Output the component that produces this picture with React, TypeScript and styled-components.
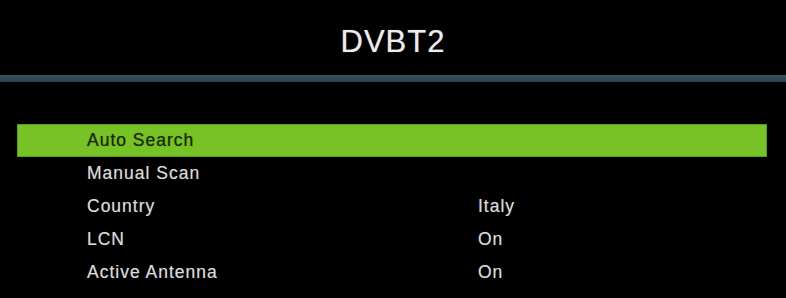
import * as React from 'react'
import styled, { createGlobalStyle } from 'styled-components'

const GlobalStyle = createGlobalStyle`
    html, body {
        margin: 0;
        padding: 0;
        background: #000;
    }
`

const Screen = styled.div`
    width: 786px;
    height: 298px;
    background: #000;
    font-family: "Liberation Sans", Arial, sans-serif;
    display: flex;
    flex-direction: column;
    overflow: hidden;
`

const Header = styled.div`
    height: 75px;
    display: flex;
    align-items: center;
    justify-content: center;
`

const Title = styled.div`
    color: #ececec;
    font-size: 31px;
    letter-spacing: 1px;
    padding-top: 9px;
    text-shadow: 0 0 1px rgba(255, 255, 255, 0.5);
`

const Divider = styled.div`
    height: 7px;
    background: linear-gradient(#37525f, #2a404d);
`

const List = styled.div`
    margin-top: 42px;
    padding: 0 19px 0 17px;
    display: flex;
    flex-direction: column;
`

const Row = styled.div<{ $active?: boolean }>`
    height: 33px;
    box-sizing: border-box;
    display: flex;
    align-items: center;
    padding-left: 69px;
    font-size: 17.5px;
    letter-spacing: 1px;
    color: ${p => (p.$active ? '#1b2a0c' : '#dadada')};
    background: ${p => (p.$active ? '#77c226' : 'transparent')};
    border: 1px solid ${p => (p.$active ? '#5c9a20' : 'transparent')};
    text-shadow: 0 0 1px ${p => (p.$active ? 'rgba(20, 40, 0, 0.6)' : 'rgba(255, 255, 255, 0.4)')};
`

const Label = styled.div`
    width: 391px;
`

const Value = styled.div``

const items: { label: string; value?: string }[] = [
    { label: 'Auto Search' },
    { label: 'Manual Scan' },
    { label: 'Country', value: 'Italy' },
    { label: 'LCN', value: 'On' },
    { label: 'Active Antenna', value: 'On' },
]

export default function App() {
    return (
        <>
            <GlobalStyle />
            <Screen>
                <Header>
                    <Title>DVBT2</Title>
                </Header>
                <Divider />
                <List>
                    {items.map((it, i) => (
                        <Row key={it.label} $active={i === 0}>
                            <Label>{it.label}</Label>
                            {it.value && <Value>{it.value}</Value>}
                        </Row>
                    ))}
                </List>
            </Screen>
        </>
    )
}
